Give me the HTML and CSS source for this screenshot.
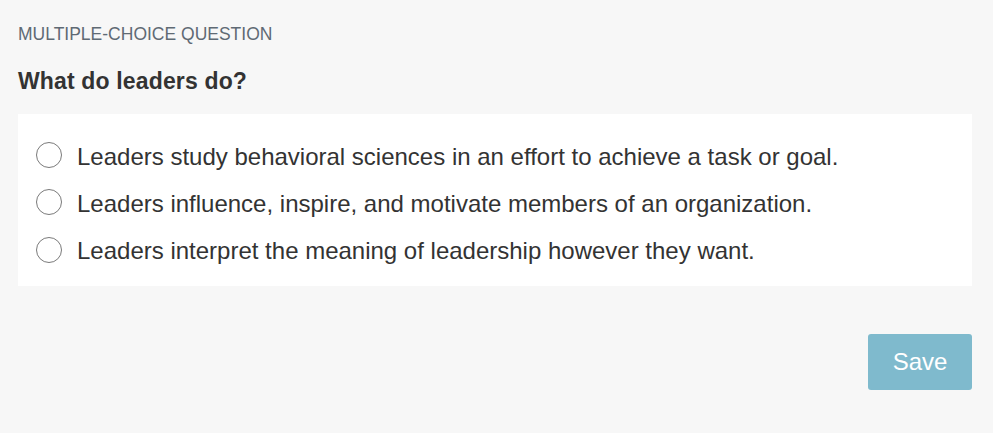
FILE: index.html
```html
<!DOCTYPE html>
<html>
<head>
<meta charset="utf-8">
<link rel="stylesheet" href="styles.css">
</head>
<body>
<div class="page">
  <div class="kind">MULTIPLE-CHOICE QUESTION</div>
  <h1 class="question">What do leaders do?</h1>
  <div class="options">
    <label class="option"><span class="radio"></span><span class="text">Leaders study behavioral sciences in an effort to achieve a task or goal.</span></label>
    <label class="option"><span class="radio"></span><span class="text">Leaders influence, inspire, and motivate members of an organization.</span></label>
    <label class="option"><span class="radio"></span><span class="text">Leaders interpret the meaning of leadership however they want.</span></label>
  </div>
  <div class="actions">
    <button class="save">Save</button>
  </div>
</div>
</body>
</html>
```

FILE: styles.css
```css
html, body {
  margin: 0;
  padding: 0;
  background: #f7f7f7;
}
body {
  font-family: "Liberation Sans", Arial, sans-serif;
  color: #333;
}
.page {
  padding: 24px 21px 0 18px;
}
.kind {
  font-size: 17.5px;
  line-height: 20px;
  color: #5f6a74;
}
.question {
  margin: 24px 0 0;
  font-size: 23px;
  line-height: 26px;
  font-weight: bold;
  letter-spacing: 0.15px;
  color: #333;
}
.options {
  margin-top: 19.5px;
  background: #fff;
  padding: 26px 0 20.5px 18px;
  display: flex;
  flex-direction: column;
  gap: 16.3px;
}
.option {
  display: flex;
  align-items: center;
  gap: 15px;
}
.radio {
  width: 26px;
  height: 26px;
  box-sizing: border-box;
  border: 1px solid #7a7a7a;
  border-radius: 50%;
  background: #fff;
  flex: none;
}
.text {
  font-size: 24px;
  line-height: 28px;
  padding-top: 3px;
  color: #333;
}
.actions {
  display: flex;
  justify-content: flex-end;
  margin-top: 48.5px;
}
.save {
  width: 104px;
  height: 56px;
  border: none;
  border-radius: 3px;
  background: #7fbacd;
  color: #fff;
  font-family: "Liberation Sans", Arial, sans-serif;
  font-size: 24px;
  padding: 0;
}
```
